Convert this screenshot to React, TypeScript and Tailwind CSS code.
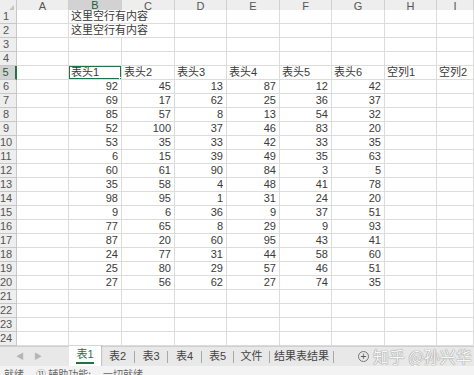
import React from "react";

const cols = ["A", "B", "C", "D", "E", "F", "G", "H", "I"];
const data: number[][] = [
  [92, 45, 13, 87, 12, 42],
  [69, 17, 62, 25, 36, 37],
  [85, 57, 8, 13, 54, 32],
  [52, 100, 37, 46, 83, 20],
  [53, 35, 33, 42, 33, 35],
  [6, 15, 39, 49, 35, 63],
  [60, 61, 90, 84, 3, 5],
  [35, 58, 4, 48, 41, 78],
  [98, 95, 1, 31, 24, 20],
  [9, 6, 36, 9, 37, 51],
  [77, 65, 8, 29, 9, 93],
  [87, 20, 60, 95, 43, 41],
  [24, 77, 31, 44, 58, 60],
  [25, 80, 29, 57, 46, 51],
  [27, 56, 62, 27, 74, 35],
];
const headers = ["表头1", "表头2", "表头3", "表头4", "表头5", "表头6", "空列1", "空列2"];

const gridCols = "grid grid-cols-[17px_52px_53px_53px_52px_53px_52px_53px_52px_1fr]";
const font = { fontFamily: '"Liberation Sans", "Noto Sans CJK SC", sans-serif' };

function cellContent(row: number, col: number): { text: string; align: "l" | "r" } | null {
  if ((row === 1 || row === 2) && col === 1) return { text: "这里空行有内容", align: "l" };
  if (row === 5 && col >= 1) return { text: headers[col - 1], align: "l" };
  if (row >= 6 && row <= 20 && col >= 1 && col <= 6) return { text: String(data[row - 6][col - 1]), align: "r" };
  return null;
}

export default function App() {
  const rows = Array.from({ length: 24 }, (_, i) => i + 1);
  return (
    <div className="w-[474px] h-[375px] overflow-hidden bg-white flex flex-col text-[#3a3a3a]" style={font}>
      {/* column header */}
      <div className={`${gridCols} h-[10px] overflow-hidden bg-[#eeeeee]`}>
        <div className="relative border-r border-b border-[#c8c8c8]">
          <div className="absolute right-[2px] bottom-[2px] w-0 h-0 border-l-[6px] border-l-transparent border-b-[6px] border-b-[#c4c4c4]" />
        </div>
        {cols.map((c) => (
          <div
            key={c}
            className={`flex items-end justify-center text-[11px] leading-none pb-[1px] border-r border-[#d0d0d0] ${
              c === "B" ? "bg-[#d2d2d2] border-b-2 border-b-[#217346] text-[#1e5e3a]" : "border-b border-b-[#c8c8c8] text-[#555]"
            }`}
          >
            {c}
          </div>
        ))}
      </div>
      {/* rows */}
      <div className="flex-1 overflow-hidden">
        {rows.map((r) => (
          <div key={r} className={`${gridCols} h-[14px]`}>
            <div
              className={`flex items-center justify-center pr-[4px] text-[11px] leading-none ${
                r === 5
                  ? "bg-[#d2d2d2] border-r-2 border-r-[#217346] border-b border-b-[#c8c8c8] text-[#1e5e3a]"
                  : "bg-[#eeeeee] border-r border-b border-[#c8c8c8] text-[#555]"
              }`}
            >
              {r}
            </div>
            {cols.map((c, ci) => {
              const content = cellContent(r, ci);
              const selected = r === 5 && ci === 1;
              const overflowText = (r === 1 || r === 2) && ci === 1;
              return (
                <div
                  key={c}
                  className={`relative flex items-center text-[11px] leading-none whitespace-nowrap border-b border-[#dcdcdc] ${
                    overflowText ? "" : "border-r"
                  } ${content?.align === "r" ? "justify-end pr-[3px]" : "pl-[2px]"} ${
                    overflowText ? "overflow-visible z-10" : "overflow-hidden"
                  }`}
                >
                  {content && <span>{content.text}</span>}
                  {selected && (
                    <>
                      <div className="absolute -left-[1px] -top-[1px] -right-[1px] -bottom-[1px] border-2 border-[#217346]" />
                      <div className="absolute -right-[3px] -bottom-[3px] w-[5px] h-[5px] bg-[#217346] border border-white" />
                    </>
                  )}
                </div>
              );
            })}
          </div>
        ))}
      </div>
      {/* sheet tab bar */}
      <div className="relative h-[20px] shrink-0 bg-[#e8e8e8] border-t border-[#cfcfcf] flex items-stretch text-[11px] text-[#444]">
        <div className="w-[69px] flex items-center gap-[10px] pl-[16px] text-[#b5b5b5] text-[8px]">
          <span>◀</span>
          <span>▶</span>
        </div>
        <div className="w-[32px] -mt-px bg-white flex flex-col items-center justify-center text-[#217346] shadow-[1px_0_1px_rgba(0,0,0,0.15)]">
          <span className="leading-none">表1</span>
          <span className="mt-[2px] w-[18px] h-[2px] bg-[#217346]" />
        </div>
        {[
          ["表2", "w-[34px]"],
          ["表3", "w-[33px]"],
          ["表4", "w-[34px]"],
          ["表5", "w-[32px]"],
          ["文件", "w-[36px]"],
          ["结果表结果", "w-[64px]"],
        ].map(([t, w]) => (
          <div key={t} className={`${w} flex items-center`}>
            <span className="flex-1 text-center">{t}</span>
            <span className="w-px h-[12px] bg-[#a8a8a8]" />
          </div>
        ))}
        <div className="ml-[24px] flex items-center">
          <div className="w-[11px] h-[11px] rounded-full border border-[#777] flex items-center justify-center text-[10px] leading-none text-[#555]">
            +
          </div>
        </div>
        {/* watermark */}
        <div
          className="absolute left-[373px] top-0 text-[16px] leading-[19px] text-[#f7f7f7] whitespace-nowrap [text-shadow:0_0_1px_#8a8a8a,0_0_1px_#8a8a8a]"
          style={{ fontFamily: '"Noto Sans CJK SC", sans-serif' }}
        >
          知乎 @孙兴华
        </div>
      </div>
      {/* status bar */}
      <div className="h-[9px] shrink-0 bg-[#f3f3f3] overflow-hidden relative">
        <div
          className="absolute top-[3px] left-[4px] flex gap-[12px] text-[10px] leading-none text-[#666] whitespace-nowrap"
          style={{ fontFamily: '"Noto Sans CJK SC", sans-serif' }}
        >
          <span>就绪</span>
          <span>⑪ 辅助功能:</span>
          <span>一切就绪</span>
        </div>
      </div>
    </div>
  );
}
